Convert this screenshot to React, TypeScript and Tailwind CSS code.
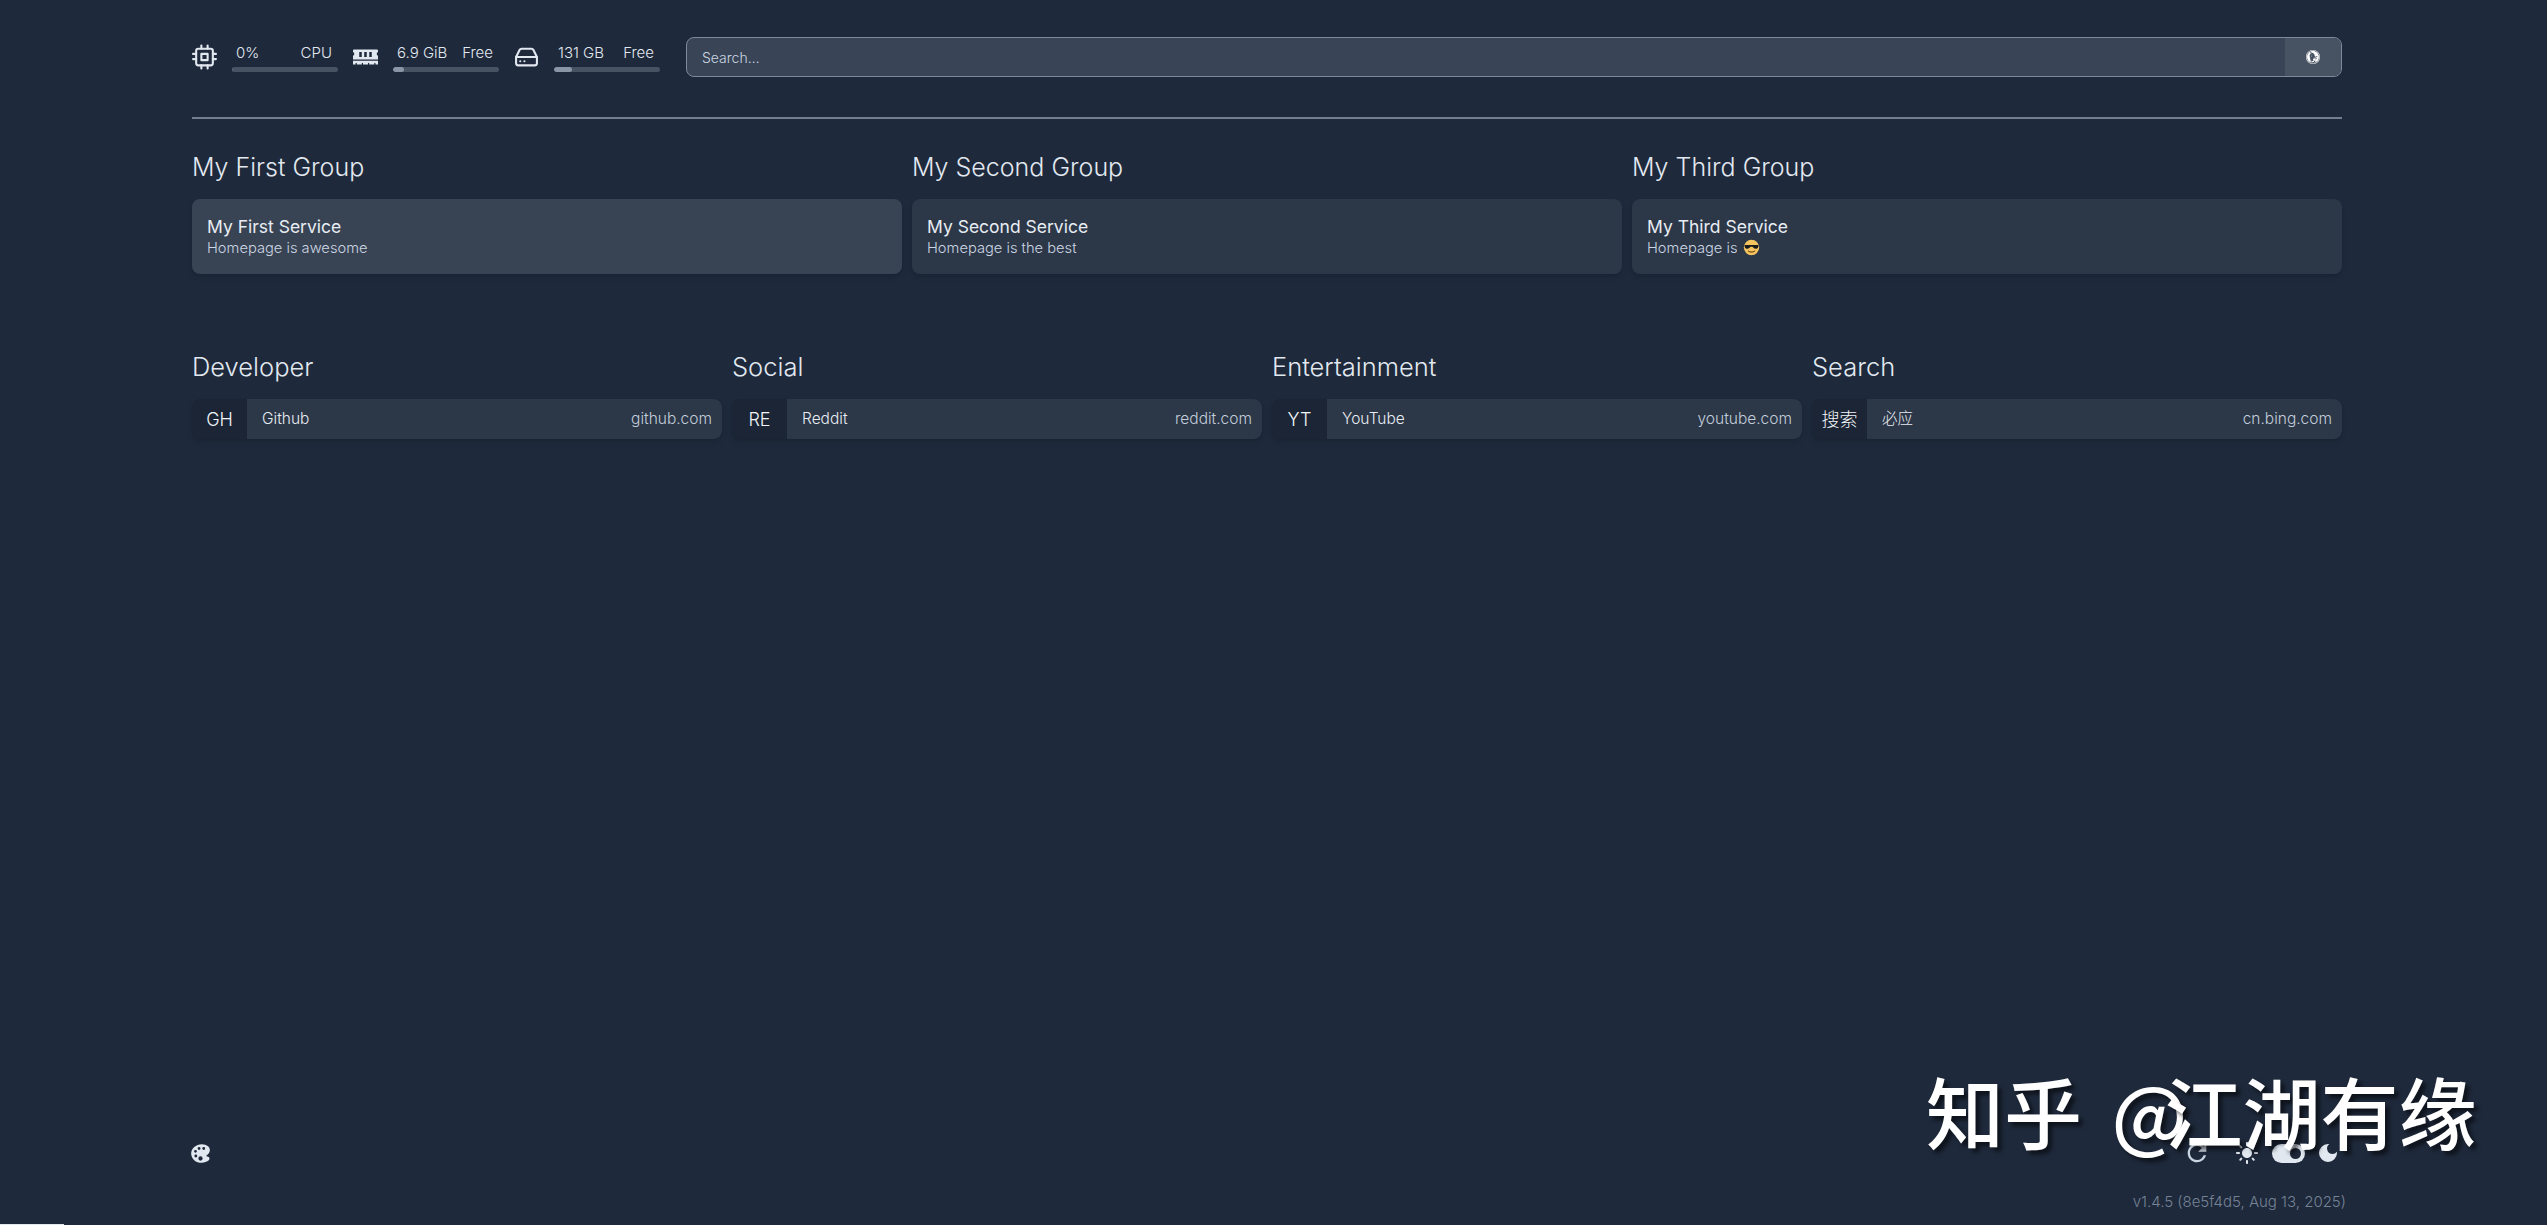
import { FiCpu, FiHardDrive } from "react-icons/fi";
import { FaMemory } from "react-icons/fa";
import { SiDuckduckgo } from "react-icons/si";
import { IoColorPalette } from "react-icons/io5";
import { MdRefresh, MdLightMode, MdDarkMode } from "react-icons/md";

const font = { fontFamily: "Inter, 'Noto Sans CJK SC', sans-serif" };

const resources = [
  { icon: FiCpu, value: "0%", label: "CPU", pct: 1, fill: "bg-[#5b6779]" },
  { icon: FaMemory, value: "6.9 GiB", label: "Free", pct: 10, fill: "bg-[#8a95a6]" },
  { icon: FiHardDrive, value: "131 GB", label: "Free", pct: 17, fill: "bg-[#8a95a6]" },
];

const services = [
  { group: "My First Group", name: "My First Service", desc: "Homepage is awesome", active: true },
  { group: "My Second Group", name: "My Second Service", desc: "Homepage is the best" },
  { group: "My Third Group", name: "My Third Service", desc: "Homepage is", emoji: true },
];

const bookmarks = [
  { group: "Developer", abbr: "GH", name: "Github", host: "github.com" },
  { group: "Social", abbr: "RE", name: "Reddit", host: "reddit.com" },
  { group: "Entertainment", abbr: "YT", name: "YouTube", host: "youtube.com" },
  { group: "Search", abbr: "搜索", name: "必应", host: "cn.bing.com" },
];

const CoolFace = () => (
  <svg viewBox="0 0 20 20" className="ml-[6px] inline-block h-[17px] w-[17px] align-[-3px]">
    <circle cx="10" cy="10" r="9" fill="#f5c45e" />
    <path d="M2 7h16v2c0 2-3 3-5 2l-2-2H9l-2 2c-2 1-5 0-5-2z" fill="#1b1b1b" />
    <path d="M6 14c2 2 6 2 8 0" stroke="#7a4b12" strokeWidth="1.4" fill="none" />
  </svg>
);

export default function App() {
  return (
    <div style={font} className="relative flex h-[1225px] flex-col overflow-hidden bg-[#1e293b] text-[#e2e8f0]">
      <div className="ml-[192px] w-[2150px]">
        {/* top widgets */}
        <div className="flex items-center pt-[37px]">
          <div className="flex w-[494px] gap-[15px]">
            {resources.map(r => (
              <div key={r.label + r.value} className="flex w-[146px] items-center gap-[15px]">
                <r.icon className="h-[26px] w-[25px] shrink-0 text-[#e2e8f0]" />
                <div className="w-[106px]">
                  <div className="flex justify-between pr-[6px] pl-[4px] text-[15px] leading-[20px] font-light">
                    <span>{r.value}</span>
                    <span>{r.label}</span>
                  </div>
                  <div className="mt-[4px] h-[5px] overflow-hidden rounded-sm bg-[#475263]">
                    <div className={`h-full rounded-sm ${r.fill}`} style={{ width: `${r.pct}%` }} />
                  </div>
                </div>
              </div>
            ))}
          </div>
          <div className="flex h-[40px] flex-1 items-center overflow-hidden rounded-lg border border-[#7d8a9c] bg-[#394557]">
            <span className="flex-1 pl-[15px] text-[14px] font-light text-[#cbd5e1]">Search…</span>
            <div className="flex h-full w-[56px] items-center justify-center bg-[#475262]">
              <SiDuckduckgo className="h-[14px] w-[14px] text-white" />
            </div>
          </div>
        </div>

        <div className="mt-[40px] h-[2px] bg-[#727f92]" />

        {/* services */}
        <div className="mt-[30px] grid grid-cols-3 gap-[10px]">
          {services.map(s => (
            <div key={s.group}>
              <h2 className="text-[25px] leading-[36px] font-light text-[#e2e8f0]">{s.group}</h2>
              <div
                className={`mt-[14px] h-[75px] rounded-lg px-[15px] pt-[16px] shadow-md ${
                  s.active ? "bg-[#384354]" : "bg-[#2c3748]"
                }`}
              >
                <div className="text-[17.5px] leading-[24px] text-[#e8edf3]">{s.name}</div>
                <div className="text-[14.7px] leading-[19px] font-light text-[#cbd5e1]">
                  {s.desc}
                  {s.emoji && <CoolFace />}
                </div>
              </div>
            </div>
          ))}
        </div>

        {/* bookmarks */}
        <div className="mt-[75px] grid grid-cols-4 gap-[10px]">
          {bookmarks.map(b => (
            <div key={b.group}>
              <h2 className="text-[25.5px] leading-[36px] font-light text-[#e2e8f0]">{b.group}</h2>
              <div className="mt-[14px] flex h-[40px] items-center overflow-hidden rounded-lg bg-[#1b2535] shadow-md">
                <div className="flex h-full w-[55px] shrink-0 items-center justify-center text-[18px] font-light text-[#f1f5f9]">
                  {b.abbr}
                </div>
                <div className="flex h-full flex-1 items-center justify-between rounded-r-lg bg-[#2c3748] pr-[10px] pl-[15px] text-[15.5px] font-light">
                  <span className="text-[#e8edf3]">{b.name}</span>
                  <span className="text-[#c3cedb]">{b.host}</span>
                </div>
              </div>
            </div>
          ))}
        </div>
      </div>

      {/* footer */}
      <div className="mt-auto ml-[189px] w-[2157px] pb-[13px]">
        <div className="flex items-center">
          <IoColorPalette className="h-[23px] w-[23px] text-[#e2e8f0]" />
          <div className="ml-auto flex items-center pr-[6px]">
            <MdRefresh className="h-[28px] w-[28px] text-[#cbd5e1]" />
            <MdLightMode className="ml-[24px] h-[24px] w-[24px] text-[#e2e8f0]" />
            <div className="ml-[13px] flex h-[19px] w-[33px] items-center justify-end rounded-full bg-[#e2e8f0] pr-[4px]">
              <div className="h-[11px] w-[11px] rounded-full bg-[#1e293b]" />
            </div>
            <MdDarkMode className="ml-[11px] h-[24px] w-[24px] text-[#e2e8f0]" />
          </div>
        </div>
        <div className="mt-[25px] text-right text-[15px] leading-[20px] font-light text-[#758296]">
          v1.4.5 (8e5f4d5, Aug 13, 2025)
        </div>
      </div>

      {/* watermark */}
      <div
        className="absolute top-[1060px] left-[1926px] text-[78px] leading-[100px] font-medium whitespace-nowrap text-white [word-spacing:12px] [text-shadow:4px_4px_4px_rgba(0,0,0,0.55)]"
        style={{ fontFamily: "'Noto Sans CJK SC', sans-serif" }}
      >
        知乎 <span className="tracking-[-23px]">@</span>
        <span>江湖有缘</span>
      </div>

      <div className="absolute bottom-0 left-0 h-[1px] w-[64px] bg-[#e2e8f0]" />
    </div>
  );
}
